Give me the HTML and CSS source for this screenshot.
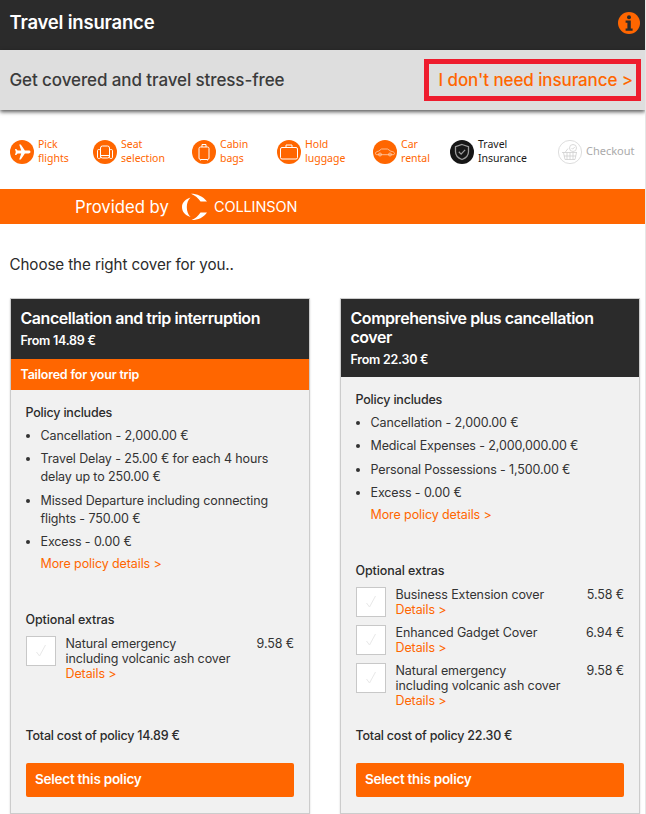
FILE: index.html
```html
<!DOCTYPE html>
<html lang="en">
<head>
<meta charset="utf-8">
<title>Travel insurance</title>
<link rel="stylesheet" href="styles.css">
</head>
<body>
<header class="topbar">
  <h1 class="topbar-title">Travel insurance</h1>
  <svg class="info-icon" viewBox="0 0 22 22" width="22" height="22" aria-hidden="true">
    <circle cx="11" cy="11" r="11" fill="#ff6600"/>
    <circle cx="11" cy="5.2" r="2" fill="#2b2b2b"/>
    <path d="M7.6 8.6h5.2v8h1.8v2.2H7.600v-2.200h1.800v-5.800H7.600z" fill="#2b2b2b"/>
  </svg>
</header>
<section class="subbar">
  <p class="subbar-text">Get covered and travel stress-free</p>
  <a class="skip-link">I don't need insurance &gt;</a>
</section>
<nav class="steps">
  <div class="step step-pick">
    <svg class="step-icon" viewBox="0 0 24 24"><circle cx="12" cy="12" r="12" fill="#ff6600"/><path d="M20.500 12c0-.9-1-1.400-2-1.400h-3.600L10.800 4.600H9.200l2 6H7.600L6.200 8.900H5l.8 3.100-.8 3.100h1.200l1.400-1.700h3.600l-2 6h1.600l4.100-6h3.600c1 0 2-.5 2-1.400z" fill="#fff"/></svg>
    <span class="step-label">Pick<br>flights</span>
  </div>
  <div class="step step-seat">
    <svg class="step-icon" viewBox="0 0 24 24"><circle cx="12" cy="12" r="12" fill="#ff6600"/><g fill="none" stroke="#fff" stroke-width="1"><rect x="7.500" y="6" width="9" height="12" rx="2"/><rect x="4.500" y="9.500" width="3" height="9" rx="1.200"/><rect x="16.500" y="9.500" width="3" height="9" rx="1.200"/><path d="M7.500 15.500h9"/></g></svg>
    <span class="step-label">Seat<br>selection</span>
  </div>
  <div class="step step-cabin">
    <svg class="step-icon" viewBox="0 0 24 24"><circle cx="12" cy="12" r="12" fill="#ff6600"/><g fill="none" stroke="#fff" stroke-width="1"><rect x="7" y="7" width="10" height="12.500" rx="1.500"/><path d="M10 7V4.500h4V7M8.500 19.500v1M15.500 19.500v1"/></g></svg>
    <span class="step-label">Cabin<br>bags</span>
  </div>
  <div class="step step-hold">
    <svg class="step-icon" viewBox="0 0 24 24"><circle cx="12" cy="12" r="12" fill="#ff6600"/><g fill="none" stroke="#fff" stroke-width="1"><rect x="3.500" y="7.500" width="17" height="11.500" rx="1.500"/><path d="M9 7.500V5h6v2.500"/></g></svg>
    <span class="step-label">Hold<br>luggage</span>
  </div>
  <div class="step step-car">
    <svg class="step-icon" viewBox="0 0 24 24"><circle cx="12" cy="12" r="12" fill="#ff6600"/><g fill="none" stroke="#ffd0b0" stroke-width=".8"><path d="M2.500 13.500c0-1.300 1-2 3-2.300L8.500 9h6l3.300 2.200c2 .3 3.700 1 3.700 2.300 0 .8-.5 1.200-1.200 1.200H3.700c-.7 0-1.200-.4-1.200-1.200z"/><circle cx="7" cy="14.500" r="1.500"/><circle cx="17" cy="14.500" r="1.500"/></g></svg>
    <span class="step-label">Car<br>rental</span>
  </div>
  <div class="step step-travel">
    <svg class="step-icon" viewBox="0 0 24 24"><circle cx="12" cy="12" r="12" fill="#161616"/><path d="M12 4.500l6.500 2.200v5c0 3.800-2.600 6.300-6.500 7.800-3.900-1.500-6.500-4-6.500-7.800v-5z" fill="none" stroke="#9a9a9a" stroke-width="1.300"/><path d="M8.800 11.800l2.300 2.300 4-4.200" fill="none" stroke="#9a9a9a" stroke-width="1.300"/></svg>
    <span class="step-label step-label-active">Travel<br>Insurance</span>
  </div>
  <div class="step step-checkout">
    <svg class="step-icon" viewBox="0 0 24 24"><circle cx="12" cy="12" r="11.600" fill="#fff" stroke="#d4d4d4" stroke-width=".8"/><g fill="none" stroke="#cfcfcf" stroke-width=".8"><circle cx="15" cy="8" r="3.500"/><path d="M13.500 8l1.200 1.200 2-2.200"/><path d="M4 12.500h15M5.500 12.500l1.500 7h10l1.500-7M9 12.500v7M12 12.500v7M15 12.500v7M6 16h12M7 12.500l3-4"/></g></svg>
    <span class="step-label step-label-muted">Checkout</span>
  </div>
</nav>
<div class="provider">
  <span class="provider-text">Provided by</span>
  <svg class="provider-logo" viewBox="0 0 28 28" width="28" height="28" aria-hidden="true">
    <path d="M9.500 4.500C4.500 6 1 9.500 1 14c0 5 3.500 8.500 8.500 10C7 21.500 5.800 18 5.800 14c0-3.800 1.200-7 3.700-9.500z" fill="#fff"/>
    <path d="M10 .8c6 0 12 2.500 16 7.700h-6.500C17.500 5.300 14 2.500 10 .8z" fill="#fff"/>
    <path d="M10.500 27c6 .2 12-2.300 15.500-7.500h-6.500c-2 3.300-5.300 6-9 7.500z" fill="#fff"/>
  </svg>
  <span class="provider-name">COLLINSON</span>
</div>
<main class="content">
  <h2 class="choose">Choose the right cover for you..</h2>
  <div class="cards">
    <article class="card">
      <header class="card-head">
        <h3 class="card-title">Cancellation and trip interruption</h3>
        <p class="card-from">From 14.89 €</p>
      </header>
      <div class="card-tag">Tailored for your trip</div>
      <div class="card-body">
        <h4 class="section-title">Policy includes</h4>
        <ul class="policy-list">
          <li>Cancellation - 2,000.00 €</li>
          <li>Travel Delay - 25.00 € for each 4 hours delay up to 250.00 €</li>
          <li>Missed Departure including connecting flights - 750.00 €</li>
          <li>Excess - 0.00 €</li>
        </ul>
        <a class="more-link">More policy details &gt;</a>
        <h4 class="section-title extras-title">Optional extras</h4>
        <div class="extra">
          <span class="checkbox"><svg viewBox="0 0 12 16" width="12" height="16"><path d="M1.500 9l3 4 6-11" fill="none" stroke="#e8e8e8" stroke-width="1"/></svg></span>
          <div class="extra-info">Natural emergency<br>including volcanic ash cover<a class="details-link">Details &gt;</a></div>
          <span class="extra-price">9.58 €</span>
        </div>
        <p class="total">Total cost of policy 14.89 €</p>
        <button class="select-btn" type="button">Select this policy</button>
      </div>
    </article>
    <article class="card">
      <header class="card-head card-head-tall">
        <h3 class="card-title">Comprehensive plus cancellation cover</h3>
        <p class="card-from">From 22.30 €</p>
      </header>
      <div class="card-body">
        <h4 class="section-title">Policy includes</h4>
        <ul class="policy-list">
          <li>Cancellation - 2,000.00 €</li>
          <li>Medical Expenses - 2,000,000.00 €</li>
          <li>Personal Possessions - 1,500.00 €</li>
          <li>Excess - 0.00 €</li>
        </ul>
        <a class="more-link">More policy details &gt;</a>
        <h4 class="section-title extras-title">Optional extras</h4>
        <div class="extra">
          <span class="checkbox"><svg viewBox="0 0 12 16" width="12" height="16"><path d="M1.500 9l3 4 6-11" fill="none" stroke="#e8e8e8" stroke-width="1"/></svg></span>
          <div class="extra-info">Business Extension cover<a class="details-link">Details &gt;</a></div>
          <span class="extra-price">5.58 €</span>
        </div>
        <div class="extra">
          <span class="checkbox"><svg viewBox="0 0 12 16" width="12" height="16"><path d="M1.500 9l3 4 6-11" fill="none" stroke="#e8e8e8" stroke-width="1"/></svg></span>
          <div class="extra-info">Enhanced Gadget Cover<a class="details-link">Details &gt;</a></div>
          <span class="extra-price">6.94 €</span>
        </div>
        <div class="extra">
          <span class="checkbox"><svg viewBox="0 0 12 16" width="12" height="16"><path d="M1.500 9l3 4 6-11" fill="none" stroke="#e8e8e8" stroke-width="1"/></svg></span>
          <div class="extra-info">Natural emergency<br>including volcanic ash cover<a class="details-link">Details &gt;</a></div>
          <span class="extra-price">9.58 €</span>
        </div>
        <p class="total">Total cost of policy 22.30 €</p>
        <button class="select-btn" type="button">Select this policy</button>
      </div>
    </article>
  </div>
</main>
<span class="edge-tick"></span>
</body>
</html>
```
FILE: styles.css
```css
* { box-sizing: border-box; }
html, body { margin: 0; padding: 0; height: 814px; overflow: hidden; }
body { font-family: "Inter", "Liberation Sans", sans-serif; background: #fff; color: #2b2b2b; border-right: 1px solid #e6e6e6; position: relative; }
h1, h2, h3, h4, p, ul { margin: 0; padding: 0; font-weight: 400; }

.edge-tick { position: absolute; right: -1px; top: 405px; width: 1px; height: 6px; background: #888; }

.topbar { height: 50px; background: #2b2b2b; display: flex; align-items: center; justify-content: space-between; padding: 0 5px 6px 9.500px; }
.topbar-title { color: #fff; font-size: 18.500px; font-weight: 600; letter-spacing: -.2px; }
.info-icon { display: block; margin-top: 2px; }

.subbar { height: 60px; background: #dedede; display: flex; align-items: center; justify-content: space-between; padding: 0 4px 0 9.500px; box-shadow: 0 2px 4px rgba(0,0,0,.65); position: relative; }
.subbar-text { font-size: 17px; font-weight: 500; color: #3b3b3b; letter-spacing: -.1px; }
.skip-link { width: 217px; height: 42px; border: 5px solid #ee1c2e; color: #ff6600; font-size: 17px; font-weight: 500; display: flex; align-items: center; justify-content: flex-end; letter-spacing: -.1px; white-space: nowrap; padding-right: 3px; }

.steps { height: 79px; display: flex; align-items: center; padding: 4px 0 0 10px; }
.step { display: flex; align-items: center; gap: 4px; }
.step-icon { width: 24px; height: 24px; flex: none; display: block; }
.step-label { color: #ff6600; font-size: 10.500px; line-height: 14px; font-family: "Noto Sans", sans-serif; padding-bottom: 2px; }
.step-label-active { color: #1a1a1a; }
.step-label-muted { color: #aaa; font-size: 11px; }
.step-pick { width: 83px; }
.step-seat { width: 99px; }
.step-cabin { width: 85px; }
.step-hold { width: 96px; }
.step-car { width: 77px; }
.step-travel { width: 108px; }

.provider { height: 35px; background: #ff6600; color: #fff; display: flex; align-items: center; padding-left: 75px; }
.provider-text { font-size: 16.700px; }
.provider-logo { margin-left: 12px; flex: none; }
.provider-name { font-size: 14.500px; margin-left: 5px; letter-spacing: -.1px; }

.content { padding: 31px 5px 0 9.500px; }
.choose { font-size: 15.200px; line-height: 20px; color: #2b2b2b; letter-spacing: -.1px; }
.cards { display: flex; gap: 30px; align-items: stretch; margin: 23px 0 0 .5px; }
.card { width: 300px; height: 516px; background: #f1f1f1; border: 1px solid #ccc; box-shadow: 0 1px 2px rgba(0,0,0,.15); display: flex; flex-direction: column; letter-spacing: -.1px; }
.card-head { background: #2b2b2b; color: #fff; padding: 9.500px 9.500px 9.500px; }
.card-head-tall { padding-bottom: 8.500px; }
.card-title { font-size: 16px; line-height: 19px; font-weight: 600; letter-spacing: -.45px; }
.card-from { font-size: 12.500px; line-height: 18px; font-weight: 600; margin-top: 4px; letter-spacing: -.25px; }
.card-tag { background: #ff6600; color: #fff; font-size: 12.500px; font-weight: 600; height: 31px; line-height: 31px; padding-left: 9.500px; letter-spacing: -.2px; }
.card-body { flex: 1; display: flex; flex-direction: column; padding: 14px 15px 16px 14.500px; }
.section-title { font-size: 12.500px; line-height: 18px; font-weight: 500; color: #2b2b2b; letter-spacing: -.2px; }
.policy-list { margin-top: 5px; padding-left: 15px; list-style: disc; font-size: 12.500px; line-height: 18px; color: #333; letter-spacing: -.12px; }
.policy-list li { margin-bottom: 5.300px; }
.more-link { color: #ff6600; font-size: 12.500px; line-height: 18px; margin: -1px 0 0 15px; }
.extras-title { margin-top: 38px; margin-bottom: 7px; letter-spacing: -.1px; }
.extra { display: flex; align-items: flex-start; margin-bottom: 8px; font-size: 12.500px; line-height: 15px; color: #333; }
.checkbox { width: 30px; height: 30px; flex: none; background: #fff; border: 1px solid #c8c8c8; display: flex; align-items: center; justify-content: center; margin-right: 10px; }
.extra-info { flex: 1; }
.details-link { display: block; color: #ff6600; }
.extra-price { flex: none; white-space: nowrap; }
.total { margin-top: auto; font-size: 12.500px; line-height: 18px; font-weight: 500; letter-spacing: -.22px; }
.select-btn { margin-top: 18px; height: 34px; background: #ff6600; color: #fff; border: 0; border-radius: 2px; text-align: left; padding: 0 9.500px 2px; font: 600 13.500px "Inter", sans-serif; letter-spacing: -.25px; }
```
